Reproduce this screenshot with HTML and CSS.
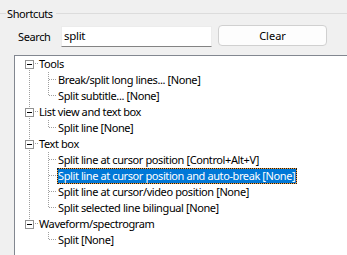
FILE: index.html
```html
<!DOCTYPE html>
<html lang="en">
<head>
  <meta charset="UTF-8">
  <title>Shortcuts</title>
  <link rel="stylesheet" href="styles.css">
</head>
<body>
  <section class="group">
    <div class="group-title"><span>Shortcuts</span></div>
    <div class="search-row">
      <label class="search-label" for="search">Search</label>
      <input class="search-input" id="search" type="text" value="split">
      <button class="btn">Clear</button>
    </div>
    <div class="tree">
      <ul class="roots">
        <li class="root">
          <div class="row root-row"><span class="expander"></span><span class="text">Tools</span></div>
          <ul class="children">
            <li class="row child-row"><span class="text">Break/split long lines... [None]</span></li>
            <li class="row child-row"><span class="text">Split subtitle... [None]</span></li>
          </ul>
        </li>
        <li class="root">
          <div class="row root-row"><span class="expander"></span><span class="text">List view and text box</span></div>
          <ul class="children">
            <li class="row child-row"><span class="text">Split line [None]</span></li>
          </ul>
        </li>
        <li class="root">
          <div class="row root-row"><span class="expander"></span><span class="text">Text box</span></div>
          <ul class="children">
            <li class="row child-row"><span class="text">Split line at cursor position [Control+Alt+V]</span></li>
            <li class="row child-row"><span class="text selected">Split line at cursor position and auto-break [None]</span></li>
            <li class="row child-row"><span class="text">Split line at cursor/video position [None]</span></li>
            <li class="row child-row"><span class="text">Split selected line bilingual [None]</span></li>
          </ul>
        </li>
        <li class="root">
          <div class="row root-row"><span class="expander"></span><span class="text">Waveform/spectrogram</span></div>
          <ul class="children">
            <li class="row child-row"><span class="text">Split [None]</span></li>
          </ul>
        </li>
      </ul>
    </div>
  </section>
</body>
</html>
```

FILE: styles.css
```css
:root {
  --bg: #f0f0f0;
  --dots: repeating-linear-gradient(to bottom, #a0a0a0 0 1px, transparent 1px 2px);
  --hdots: repeating-linear-gradient(to right, #a0a0a0 0 1px, transparent 1px 2px);
  --select: #0078d7;
}

html, body {
  margin: 0;
  height: 100%;
  overflow: hidden;
}

body {
  background: var(--bg);
  font-family: 'Noto Sans', 'Open Sans', sans-serif;
  font-size: 11px;
  letter-spacing: -0.4px;
  color: #000;
}

.group {
  padding-top: 5px;
}

.group-title {
  display: flex;
  align-items: center;
  height: 16px;
}
.group-title::before,
.group-title::after {
  content: "";
  height: 1px;
  background: #dcdcdc;
}
.group-title::before {
  width: 6px;
  margin-right: 1px;
}
.group-title::after {
  flex: 1;
  margin-left: 3px;
}

/* search bar */
.search-row {
  display: flex;
  align-items: center;
  margin-top: 4px;
  padding-left: 18px;
}
.search-label {
  width: 43px;
}
.search-input {
  box-sizing: border-box;
  width: 151px;
  height: 21px;
  margin: 0;
  padding: 0 2px 1px;
  border: 1px solid #ececec;
  border-bottom-color: #838383;
  background: #fff;
  font: inherit;
  font-size: 11.5px;
  letter-spacing: -0.3px;
  color: #000;
  outline: none;
}
.btn {
  box-sizing: border-box;
  width: 109px;
  height: 21px;
  margin: 0 0 1px 6px;
  padding: 0;
  border: 1px solid #d0d0d0;
  border-radius: 4px;
  background: #fdfdfd;
  font: inherit;
  color: #000;
}

/* tree view */
.tree {
  margin: 8px 0 0 14px;
  width: 360px;
  height: 220px;
  border-left: 1px solid #828790;
  border-top: 1px solid #828790;
  background: #fff;
}
.tree ul {
  list-style: none;
  margin: 0;
  padding: 0;
}

.root {
  background: var(--dots) 14px 0 / 1px 100% no-repeat;
}
.root:first-child {
  background-position: 14px 8px;
}
.root:last-child {
  background-size: 1px 8px;
}

.row {
  display: flex;
  align-items: center;
  height: 16px;
  white-space: nowrap;
}

.root-row {
  padding-left: 10px;
}
.expander {
  position: relative;
  box-sizing: border-box;
  width: 9px;
  height: 9px;
  border: 1px solid #919191;
  background: #fff;
}
.expander::after {
  content: "";
  position: absolute;
  left: 1px;
  top: 3px;
  width: 5px;
  height: 1px;
  background: #000;
}
.root-row .text {
  margin-left: 1px;
  padding-left: 4px;
  background: var(--hdots) 0 7px / 4px 1px no-repeat;
}

.children {
  background: var(--dots) 33px 0 / 1px calc(100% - 8px) no-repeat;
}
.child-row {
  padding-left: 34px;
}
.child-row::before {
  content: "";
  width: 8px;
  height: 16px;
  background: var(--hdots) 0 7px / 8px 1px no-repeat;
}

.text {
  line-height: 16px;
  padding: 0 2px 0 1px;
}
.selected {
  box-sizing: border-box;
  height: 16px;
  line-height: 14px;
  padding: 0 1px 0 0;
  color: #fff;
  border: 1px dotted #1a1a1a;
  background: linear-gradient(var(--select), var(--select)) padding-box, #f7a03a border-box;
}
```
